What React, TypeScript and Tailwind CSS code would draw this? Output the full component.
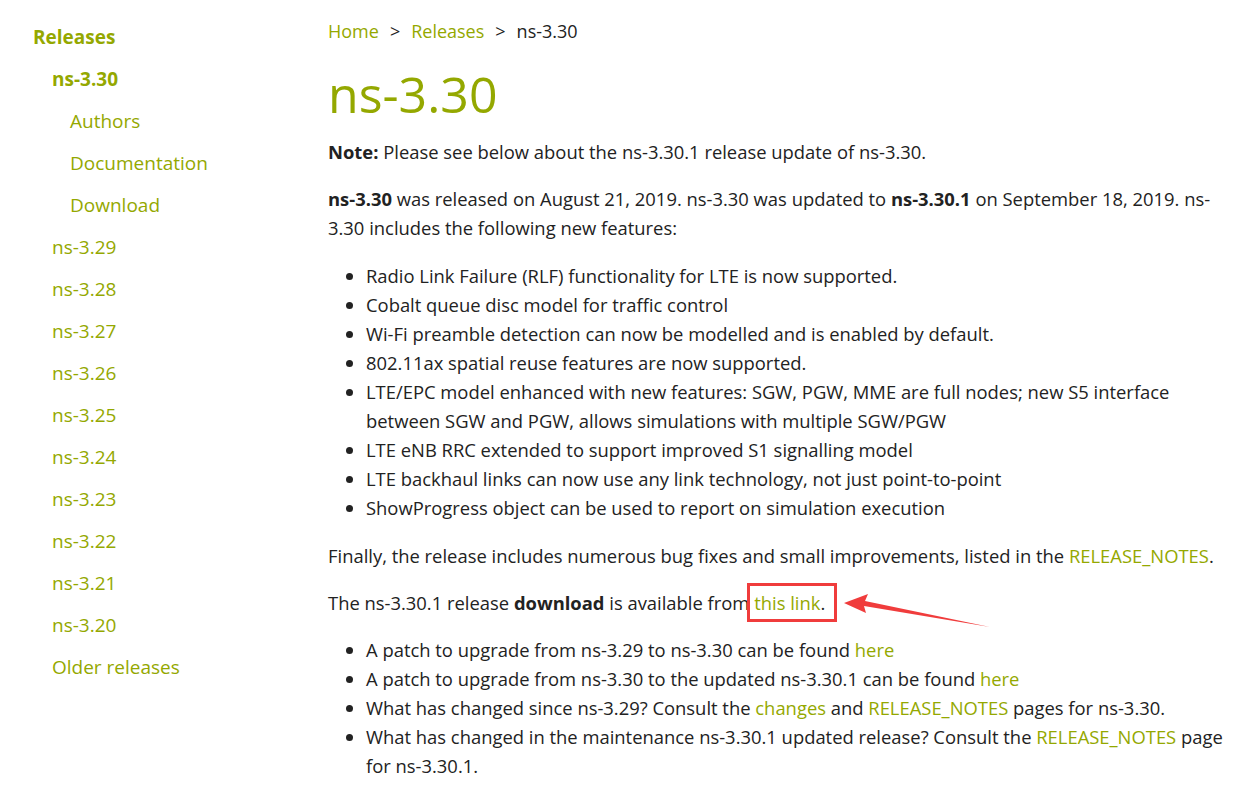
import React from "react";

const GREEN = "text-[#94a800]";

const versions = ["ns-3.29", "ns-3.28", "ns-3.27", "ns-3.26", "ns-3.25", "ns-3.24", "ns-3.23", "ns-3.22", "ns-3.21", "ns-3.20"];

const features = [
  "Radio Link Failure (RLF) functionality for LTE is now supported.",
  "Cobalt queue disc model for traffic control",
  "Wi-Fi preamble detection can now be modelled and is enabled by default.",
  "802.11ax spatial reuse features are now supported.",
  "LTE/EPC model enhanced with new features: SGW, PGW, MME are full nodes; new S5 interface between SGW and PGW, allows simulations with multiple SGW/PGW",
  "LTE eNB RRC extended to support improved S1 signalling model",
  "LTE backhaul links can now use any link technology, not just point-to-point",
  "ShowProgress object can be used to report on simulation execution",
];

const Link = ({ children }: { children: React.ReactNode }) => <a className={GREEN}>{children}</a>;

const Sidebar = () => (
  <nav className={`w-[328px] shrink-0 pl-[33px] pt-[22px] text-[19px] leading-[30px] ${GREEN}`}>
    <div className="font-bold">Releases</div>
    <div className="pl-[19px] mt-[12px] font-bold">ns-3.30</div>
    <div className="pl-[37px] flex flex-col gap-[12px] mt-[12px]">
      <div>Authors</div>
      <div>Documentation</div>
      <div>Download</div>
    </div>
    <div className="pl-[19px] flex flex-col gap-[12px] mt-[12px]">
      {versions.map((v) => (
        <div key={v}>{v}</div>
      ))}
      <div>Older releases</div>
    </div>
  </nav>
);

export default function App() {
  return (
    <div className="min-h-[803px] w-[1252px] bg-white flex text-[#222] font-['Open_Sans',sans-serif]">
      <Sidebar />
      <main className="w-[898px] pt-[17px] text-[18.4px] leading-[29px]">
        <div className="flex gap-[11px] text-[18px]">
          <Link>Home</Link>
          <span>&gt;</span>
          <Link>Releases</Link>
          <span>&gt;</span>
          <span>ns-3.30</span>
        </div>
        <h1 className={`text-[50px] leading-[64px] mt-[16px] ${GREEN}`}>ns-3.30</h1>
        <p className="mt-[11px]">
          <b>Note:</b> Please see below about the ns-3.30.1 release update of ns-3.30.
        </p>
        <p className="mt-[18px]">
          <b>ns-3.30</b> was released on August 21, 2019. ns-3.30 was updated to <b>ns-3.30.1</b> on September 18, 2019. ns-3.30 includes the following new features:
        </p>
        <ul className="mt-[19px] pl-[38px] list-disc">
          {features.map((f) => (
            <li key={f}>{f}</li>
          ))}
        </ul>
        <p className="mt-[19px]">
          Finally, the release includes numerous bug fixes and small improvements, listed in the <Link>RELEASE_NOTES</Link>.
        </p>
        <p className="mt-[18px]">
          The ns-3.30.1 release <b>download</b> is available from{" "}
          <span className="relative inline-block">
            <Link>this link</Link>.
            <span className="absolute -left-[7px] -right-[12px] -top-[5px] -bottom-[5px] border-[3px] border-[#f03c3c]" />
            <svg className="absolute left-[calc(100%+19px)] top-[3px]" width="150" height="40" viewBox="0 0 150 40">
              <path d="M0 12 L24 3 L21 10 L146 36 L20 15 L22 22 Z" fill="#f03c3c" />
            </svg>
          </span>
        </p>
        <ul className="mt-[18px] pl-[38px] list-disc">
          <li>A patch to upgrade from ns-3.29 to ns-3.30 can be found <Link>here</Link></li>
          <li>A patch to upgrade from ns-3.30 to the updated ns-3.30.1 can be found <Link>here</Link></li>
          <li>What has changed since ns-3.29? Consult the <Link>changes</Link> and <Link>RELEASE_NOTES</Link> pages for ns-3.30.</li>
          <li>What has changed in the maintenance ns-3.30.1 updated release? Consult the <Link>RELEASE_NOTES</Link> page for ns-3.30.1.</li>
        </ul>
      </main>
    </div>
  );
}
